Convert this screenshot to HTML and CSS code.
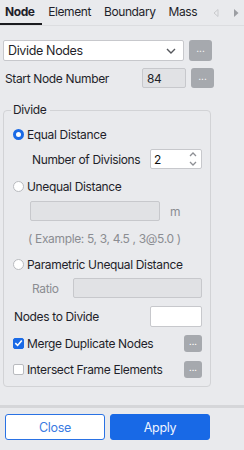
FILE: index.html
```html
<!DOCTYPE html>
<html lang="en">
<head>
  <meta charset="UTF-8">
  <meta name="viewport" content="width=device-width, initial-scale=1.0">
  <title>Divide Nodes</title>
  <link rel="stylesheet" href="styles.css">
</head>
<body>
  <div class="panel">
    <div class="tabs">
      <span class="tab active">Node</span>
      <span class="tab">Element</span>
      <span class="tab">Boundary</span>
      <span class="tab">Mass</span>
      <span class="tab-arrows">
        <svg width="6" height="8" viewBox="0 0 6 8"><path d="M5 0.5 L1 4 L5 7.5 Z" fill="none" stroke="#c9cacd" stroke-width="1"/></svg>
        <svg width="6" height="8" viewBox="0 0 6 8"><path d="M1 0 L5.5 4 L1 8 Z" fill="#9c9ea3"/></svg>
      </span>
    </div>

    <div class="body">
      <div class="row row-select">
        <div class="select">
          <span>Divide Nodes</span>
          <svg width="10" height="6" viewBox="0 0 10 6"><path d="M1 1 L5 5 L9 1" fill="none" stroke="#55575c" stroke-width="1.4"/></svg>
        </div>
        <button class="more">...</button>
      </div>

      <div class="row row-start">
        <span class="label">Start Node Number</span>
        <span class="field field-off">84</span>
        <button class="more">...</button>
      </div>

      <fieldset class="group">
        <legend>Divide</legend>

        <div class="opt opt-equal">
          <span class="radio checked"></span>
          <span>Equal Distance</span>
        </div>
        <div class="sub sub-div">
          <span>Number of Divisions</span>
          <span class="field spin">
            <span>2</span>
            <svg width="8" height="16" viewBox="0 0 8 16"><path d="M1 5 L4 2 L7 5 M1 11 L4 14 L7 11" fill="none" stroke="#8d8f94" stroke-width="1.3"/></svg>
          </span>
        </div>

        <div class="opt opt-unequal">
          <span class="radio"></span>
          <span>Unequal Distance</span>
        </div>
        <div class="sub sub-dist">
          <span class="field field-off wide"></span>
          <span class="muted unit">m</span>
        </div>
        <div class="sub sub-example muted">( Example: 5, 3, 4.5 , 3@5.0 )</div>

        <div class="opt opt-param">
          <span class="radio"></span>
          <span>Parametric Unequal Distance</span>
        </div>
        <div class="sub sub-ratio">
          <span class="muted">Ratio</span>
          <span class="field field-off ratio"></span>
        </div>

        <div class="opt opt-nodes">
          <span class="nodes-label">Nodes to Divide</span>
          <span class="field nodes"></span>
        </div>

        <div class="opt opt-check">
          <span class="check checked">
            <svg width="9" height="8" viewBox="0 0 9 8"><path d="M1.3 4.2 L3.6 6.4 L7.8 1.4" fill="none" stroke="#fff" stroke-width="1.6"/></svg>
          </span>
          <span>Merge Duplicate Nodes</span>
          <button class="more small">...</button>
        </div>
        <div class="opt opt-check">
          <span class="check"></span>
          <span>Intersect Frame Elements</span>
          <button class="more small">...</button>
        </div>
      </fieldset>
    </div>

    <div class="footer">
      <button class="btn btn-close">Close</button>
      <button class="btn btn-apply">Apply</button>
    </div>
  </div>
</body>
</html>
```

FILE: styles.css
```css
body {
  margin: 0;
  background-color: #e9eaed;
  font-family: Inter, 'Noto Sans', sans-serif;
  font-size: 12px;
  letter-spacing: -0.35px;
  color: #1f1f2a;
}

.panel {
  width: 244px;
  height: 450px;
  overflow: hidden;
}

.tabs {
  display: flex;
  align-items: center;
  height: 25px;
  border-bottom: 1px solid #dcdde0;
  font-size: 12px;
  letter-spacing: -0.4px;
}

.tab {
  height: 23px;
  line-height: 23px;
  padding: 0 6.5px;
  border-bottom: 2px solid transparent;
  white-space: nowrap;
}

.tab.active {
  font-weight: 700;
  padding: 0 7px 0 5px;
  border-bottom-color: #1b1b1f;
}

.tab-arrows {
  display: flex;
  gap: 14px;
  margin-left: auto;
  padding-right: 5px;
}

.body {
  padding: 14px 0 0 3px;
}

.row {
  display: flex;
  align-items: center;
}

.row-select {
  height: 21px;
}

.select {
  box-sizing: border-box;
  display: flex;
  align-items: center;
  justify-content: space-between;
  width: 181px;
  height: 21px;
  padding: 0 7px 0 4px;
  background-color: #fff;
  border: 1px solid #c7c8cc;
  border-radius: 2px;
  font-size: 12.5px;
}

.more {
  width: 23px;
  height: 21px;
  margin-left: 5px;
  padding: 0 0 5px;
  border: none;
  border-radius: 3px;
  background-color: #a6a9ae;
  color: #fff;
  font-family: inherit;
  font-size: 10px;
  letter-spacing: 0;
  line-height: 1;
}

.row-start {
  height: 20px;
  margin-top: 7px;
}

.row-start .label {
  width: 137px;
  padding-left: 2px;
}

.row-start .more {
  height: 20px;
}

.field {
  box-sizing: border-box;
  display: flex;
  align-items: center;
  height: 20px;
  padding: 0 4px;
  background-color: #fff;
  border: 1px solid #c7c8cc;
  border-radius: 2px;
}

.field-off {
  background-color: #e1e2e5;
  width: 44px;
}

.group {
  width: 208px;
  box-sizing: border-box;
  margin: 14px 0 0;
  padding: 4px 8px 4px 9px;
  border: 1px solid #d2d3d6;
  border-radius: 4px;
}

.group legend {
  padding: 0 4px 0 2px;
  margin-left: -2px;
  line-height: 16px;
}

.opt {
  display: flex;
  align-items: center;
  gap: 3px;
}

.sub {
  display: flex;
  align-items: center;
}

.opt-equal { height: 24px; }
.sub-div { height: 26px; padding-left: 19px; }
.opt-unequal { height: 28px; }
.sub-dist { height: 22px; padding-left: 17px; }
.sub-example { height: 32px; padding-left: 15px; }
.opt-param { height: 20px; }
.sub-ratio { height: 28px; padding-left: 19px; }
.opt-nodes { height: 28px; }
.opt-check { height: 26px; }

.radio {
  box-sizing: border-box;
  width: 11px;
  height: 11px;
  border: 1px solid #b9bbbf;
  border-radius: 50%;
  background-color: #fff;
}

.radio.checked {
  border: 3px solid #1a6ae6;
}

.check {
  box-sizing: border-box;
  display: flex;
  align-items: center;
  justify-content: center;
  width: 11px;
  height: 11px;
  border: 1px solid #b9bbbf;
  border-radius: 2px;
  background-color: #fff;
}

.check.checked {
  border-color: #1a6ae6;
  background-color: #1a6ae6;
}

.spin {
  justify-content: space-between;
  width: 52px;
  margin-left: auto;
  padding: 0 4px 0 3px;
  color: #111;
}

.wide {
  width: 130px;
}

.unit {
  margin-left: 10px;
}

.muted {
  color: #8b8d92;
}

.ratio {
  width: 129px;
  margin-left: auto;
}

.nodes-label {
  padding-left: 1px;
}

.nodes {
  width: 52px;
  height: 21px;
  margin-left: auto;
}

.more.small {
  width: 18px;
  height: 17px;
  margin-left: auto;
  padding-bottom: 4px;
  font-size: 9px;
}

.footer {
  display: flex;
  gap: 5px;
  margin-top: 18px;
  padding: 6px 5px 0;
  border-top: 3px solid #d5d6d9;
}

.btn {
  box-sizing: border-box;
  width: 100px;
  height: 26px;
  border-radius: 3px;
  font-family: inherit;
  font-size: 12.5px;
  letter-spacing: -0.3px;
}

.btn-close {
  background-color: #fff;
  border: 1px solid #2a72e4;
  color: #3a7be2;
}

.btn-apply {
  background-color: #1869e6;
  border: 1px solid #1869e6;
  color: #eef4ff;
}
```
